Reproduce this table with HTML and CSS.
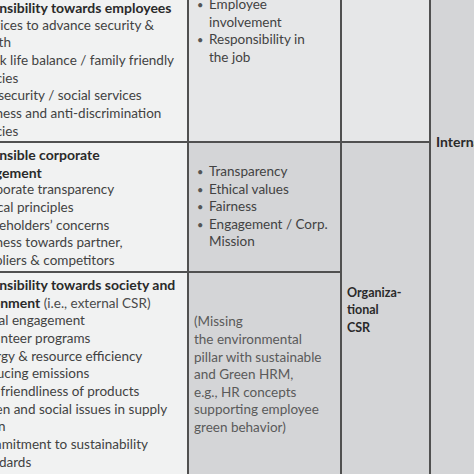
FILE: index.html
```html
<!DOCTYPE html>
<html lang="en">
  <head>
    <meta charset="UTF-8" />
    <meta name="viewport" content="width=device-width, initial-scale=1.0" />
    <title>CSR dimensions</title>
    <link rel="stylesheet" href="styles.css">
  </head>
  <body>
    <div class="matrix">
      <div class="cell topic">
        <p class="head">Responsibility towards employees</p>
        <ul class="dots">
          <li>Services to advance security &amp;<br>health</li>
          <li>Work life balance / family friendly<br>policies</li>
          <li>Job security / social services</li>
          <li>Fairness and anti-discrimination<br>policies</li>
        </ul>
      </div>
      <div class="cell hrm light">
        <ul class="dots">
          <li>Employee<br>involvement</li>
          <li>Responsibility in<br>the job</li>
        </ul>
      </div>
      <div class="cell light"></div>
      <div class="cell internal">Internal CSR</div>

      <div class="cell topic">
        <p class="head">Responsible corporate<br>management</p>
        <ul class="dots">
          <li>Corporate transparency</li>
          <li>Ethical principles</li>
          <li>Stakeholders’ concerns</li>
          <li>Fairness towards partner,<br>suppliers &amp; competitors</li>
        </ul>
      </div>
      <div class="cell hrm centered">
        <ul class="dots">
          <li>Transparency</li>
          <li>Ethical values</li>
          <li>Fairness</li>
          <li>Engagement / Corp.<br>Mission</li>
        </ul>
      </div>
      <div class="cell org centered">Organiza-<br>tional<br>CSR</div>

      <div class="cell topic">
        <p class="head">Responsibility towards society and<br>environment <span>(i.e., external CSR)</span></p>
        <ul class="dots">
          <li>Social engagement</li>
          <li>Volunteer programs</li>
          <li>Energy &amp; resource efficiency</li>
          <li>Reducing emissions</li>
          <li>Eco-friendliness of products</li>
          <li>Green and social issues in supply<br>chain</li>
          <li>Commitment to sustainability<br>standards</li>
        </ul>
      </div>
      <div class="cell missing centered">
        <p>(Missing<br>the environmental<br>pillar with sustainable<br>and Green HRM,<br>e.g., HR concepts<br>supporting employee<br>green behavior)</p>
      </div>
    </div>
  </body>
</html>
```

FILE: styles.css
```css
body {
  margin: 0;
  overflow: hidden;
  background: #d4d5d7;
  font-family: Lato, "Open Sans", sans-serif;
  font-size: 13.5px;
  line-height: 17.65px;
  color: #424242;
}

p,
ul {
  margin: 0;
  padding: 0;
}

.matrix {
  display: grid;
  grid-template-columns: 237px 153px 89px 120px;
  grid-template-rows: 147px 130px 206px;
  margin: -4px 0 0 -48px;
  background: #d4d5d7;
}

.cell {
  border-right: 2px solid #505050;
  border-bottom: 2px solid #505050;
}

.topic {
  background: #f1f2f2;
  padding: 3px 0 0 10px;
}

.topic .head {
  margin-left: -1px;
}

.head {
  font-weight: 700;
  font-size: 14px;
  color: #2a2a2a;
}

.head span {
  font-weight: 400;
  font-size: 13.5px;
  color: #4a4a4a;
}

.dots {
  list-style: none;
}

.dots li {
  display: grid;
  grid-template-columns: 12px 1fr;
}

.dots li::before {
  content: '•';
  font-size: 11px;
  color: #555;
}

.light {
  background: #e6e7e8;
}

.hrm {
  padding-left: 8px;
}

.centered {
  display: flex;
  flex-direction: column;
  justify-content: center;
}

.missing {
  padding-left: 5px;
  color: #5a5a5a;
}

.org {
  grid-column: 3;
  grid-row: 2 / 4;
  padding-left: 5px;
  font-size: 12.5px;
  font-weight: 700;
  color: #2a2a2a;
}

.internal {
  grid-column: 4;
  grid-row: 1 / 4;
  padding: 137px 0 0 5px;
  font-weight: 700;
  font-size: 14px;
  color: #2a2a2a;
  white-space: nowrap;
}
```
